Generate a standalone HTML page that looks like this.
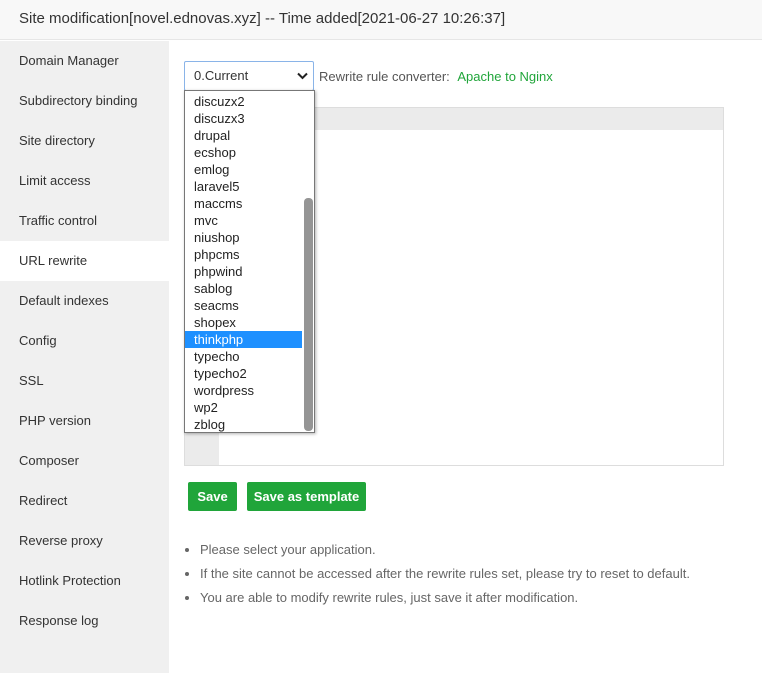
<!DOCTYPE html><html><head><style>
body{margin:0;width:762px;height:673px;background:#fff;font-family:"Liberation Sans",sans-serif;position:relative;overflow:hidden;color:#555}
.hd{position:absolute;left:0;top:0;width:762px;height:40px;background:#f8f8f8;border-bottom:1px solid #e6e6e6;font-size:15px;line-height:38px;padding-left:19px;box-sizing:border-box;color:#333}
.sb{position:absolute;left:0;top:41px;width:169px;height:632px;background:#f0f0f0}
.sb div{height:40px;line-height:40px;padding-left:19px;font-size:13px;color:#333}
.sb .on{background:#fff}
.sel{position:absolute;left:184px;top:61px;width:130px;height:30px;border:1px solid #8ab4e8;border-radius:2px;box-sizing:border-box;font-size:13px;line-height:28px;padding-left:9px;color:#333}
.sel svg{position:absolute;right:5px;top:10px}
.lbl{position:absolute;left:319px;top:69px;font-size:13px;color:#555}
.lbl b{font-weight:normal;color:#20a53a;margin-left:4px}
.ed{position:absolute;left:184px;top:107px;width:540px;height:359px;border:1px solid #ddd;box-sizing:border-box}
.ed .top{position:absolute;left:0;top:0;right:0;height:22px;background:#ebebeb}
.ed .gut{position:absolute;left:0;top:0;width:34px;bottom:0;background:#ebebeb}
.dd{position:absolute;left:184px;top:90px;width:131px;height:343px;border:1px solid #777;box-sizing:border-box;background:#fff;box-shadow:1px 1px 3px rgba(0,0,0,.3);font-size:13px;color:#222}
.dd div{height:17px;line-height:17px;padding-left:9px}
.dd .hl{background:#1e90ff;color:#fff;width:108px}
.dd .sc{position:absolute;right:1px;top:107px;width:9px;height:233px;padding:0;background:#959595;border-radius:4px}
.btn{position:absolute;top:482px;height:29px;background:#20a53a;color:#fff;font-size:13px;font-weight:bold;line-height:29px;text-align:center;border-radius:2px}
ul{position:absolute;left:184px;top:538px;margin:0;padding:0 0 0 16px;font-size:13px;color:#666;line-height:24px}
</style></head><body>
<div class="hd">Site modification[novel.ednovas.xyz] -- Time added[2021-06-27 10:26:37]</div>
<div class="sb"><div>Domain Manager</div><div>Subdirectory binding</div><div>Site directory</div><div>Limit access</div><div>Traffic control</div><div class="on">URL rewrite</div><div>Default indexes</div><div>Config</div><div>SSL</div><div>PHP version</div><div>Composer</div><div>Redirect</div><div>Reverse proxy</div><div>Hotlink Protection</div><div>Response log</div></div>
<div class="sel">0.Current<svg width="11" height="8" viewBox="0 0 11 8"><path d="M1 1.5l4.5 4.5 4.5-4.5" stroke="#222" stroke-width="2" fill="none"/></svg></div>
<div class="lbl">Rewrite rule converter: <b>Apache to Nginx</b></div>
<div class="ed"><div class="top"></div><div class="gut"></div></div>
<div class="dd"><div style="height:2px"></div><div>discuzx2</div><div>discuzx3</div><div>drupal</div><div>ecshop</div><div>emlog</div><div>laravel5</div><div>maccms</div><div>mvc</div><div>niushop</div><div>phpcms</div><div>phpwind</div><div>sablog</div><div>seacms</div><div>shopex</div><div class="hl">thinkphp</div><div>typecho</div><div>typecho2</div><div>wordpress</div><div>wp2</div><div>zblog</div><div class="sc"></div></div>
<div class="btn" style="left:188px;width:49px">Save</div>
<div class="btn" style="left:247px;width:119px">Save as template</div>
<ul><li>Please select your application.</li><li>If the site cannot be accessed after the rewrite rules set, please try to reset to default.</li><li>You are able to modify rewrite rules, just save it after modification.</li></ul>
</body></html>
